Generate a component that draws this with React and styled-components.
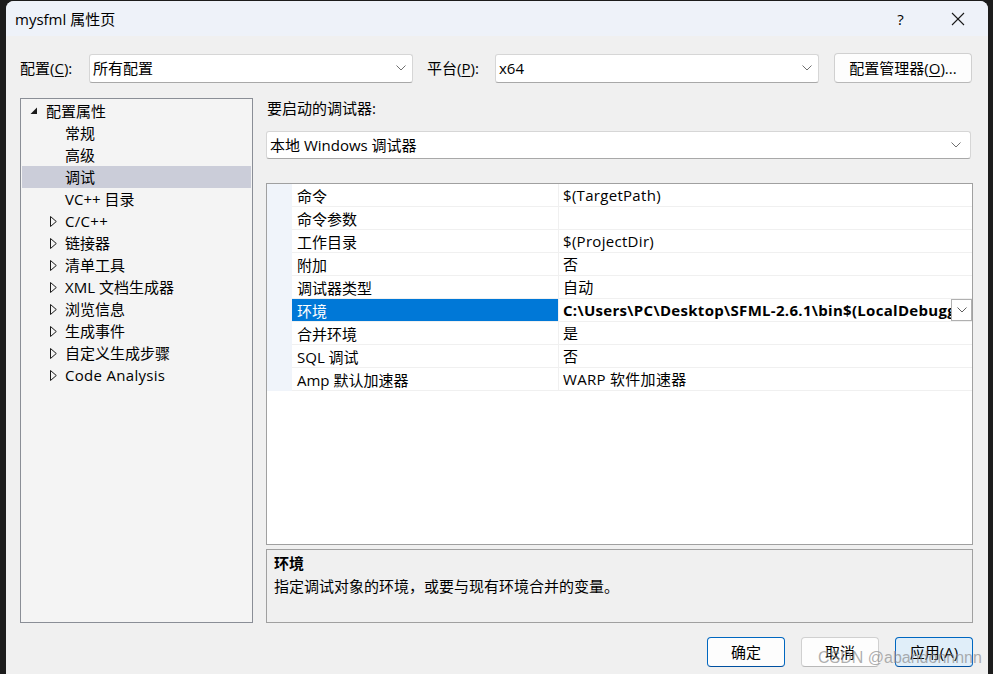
import React from "react";
import styled, { createGlobalStyle } from "styled-components";

const Global = createGlobalStyle`
  html, body { margin: 0; padding: 0; background: #1c1c1c; overflow: hidden; }
  body { font-family: "Open Sans", "Noto Sans CJK SC", sans-serif; }
  * { box-sizing: border-box; }
`;

const UI_FONT = `"Open Sans", "Noto Sans CJK SC", sans-serif`;

const Screen = styled.div`
  width: 993px;
  height: 674px;
  padding-left: 6px;
  padding-top: 1px;
  overflow: hidden;
  position: relative;
`;

const Window = styled.div`
  width: 982px;
  height: 700px;
  background: #f0f0f0;
  border-radius: 8px 8px 0 0;
  display: flex;
  flex-direction: column;
  font-family: ${UI_FONT};
  font-size: 15px;
  color: #000;
  overflow: hidden;
`;

const TitleBar = styled.div`
  height: 35px;
  background: #eef2f9;
  display: flex;
  align-items: center;
  padding-left: 9px;
  padding-right: 2px;
`;

const Title = styled.div`
  flex: 1;
  font-size: 15px;
  line-height: 1.2;
`;

const CaptionButton = styled.div`
  width: 57px;
  height: 35px;
  display: flex;
  align-items: center;
  justify-content: center;
  font-size: 15px;
`;

const Body = styled.div`
  padding: 0 15px 0 14px;
  display: flex;
  flex-direction: column;
`;

const TopRow = styled.div`
  margin-top: 17px;
  height: 30px;
  display: flex;
  align-items: center;
`;

const FieldLabel = styled.span`
  width: ${(p) => p.$w}px;
  line-height: 1.2;
  u { text-decoration: underline; text-underline-offset: 2px; }
`;

const Combo = styled.div`
  width: ${(p) => (p.$w ? `${p.$w}px` : "auto")};
  flex: ${(p) => (p.$w ? "none" : "1")};
  height: 29px;
  background: #fff;
  border: 1px solid #d6d6d6;
  border-bottom-color: #a8a8a8;
  border-radius: 3px;
  display: flex;
  align-items: center;
  padding: 0 6px 0 3px;
  margin-right: ${(p) => p.$mr || 0}px;
`;

const ComboText = styled.span`
  flex: 1;
  line-height: 1.2;
  white-space: nowrap;
`;

const Chevron = ({ color = "#707070" }) => (
  <svg width="10" height="6" viewBox="0 0 10 6">
    <polyline points="0.5,0.5 5,5 9.5,0.5" fill="none" stroke={color} strokeWidth="1" />
  </svg>
);

const PushButton = styled.button`
  font: inherit;
  font-size: 15px;
  color: #000;
  width: ${(p) => p.$w}px;
  height: 30px;
  padding: 0;
  border-radius: 4px;
  border: 1px solid ${(p) => (p.$accent ? "#0067c0" : "#d0d0d0")};
  border-bottom-color: ${(p) => (p.$accent ? "#0050a0" : "#b8b8b8")};
  background: ${(p) => (p.$tint ? "#e0eef9" : "#fdfdfd")};
  display: flex;
  align-items: center;
  justify-content: center;
  line-height: 1.2;
  u { text-decoration: underline; text-underline-offset: 2px; }
`;

const Main = styled.div`
  margin-top: 15px;
  height: 525px;
  display: flex;
`;

const TreePanel = styled.div`
  width: 233px;
  background: #f4f4f4;
  border: 1px solid #8a8e96;
  padding: 1px;
  display: flex;
  flex-direction: column;
`;

const TreeRow = styled.div`
  height: 22px;
  display: flex;
  align-items: center;
  background: ${(p) => (p.$selected ? "#cbcdd9" : "transparent")};
  padding-left: ${(p) => p.$indent}px;
  line-height: 1.2;
  white-space: nowrap;
  letter-spacing: ${(p) => (p.$latin ? "0.3px" : "0")};
`;

const Twisty = styled.span`
  width: ${(p) => p.$w || 15}px;
  display: flex;
  align-items: center;
`;

const RightPane = styled.div`
  margin-left: 13px;
  flex: 1;
  display: flex;
  flex-direction: column;
`;

const SectionLabel = styled.div`
  height: 20px;
  display: flex;
  align-items: center;
  padding-left: 1px;
  line-height: 1.2;
`;

const DebuggerCombo = styled(Combo)`
  margin-top: 13px;
  height: 28px;
  margin-right: 2px;
  padding-left: 3px;
  padding-right: 9px;
`;

const Grid = styled.div`
  margin-top: 24px;
  height: 362px;
  background: #fff;
  border: 1px solid #a0a0a0;
  display: flex;
  flex-direction: column;
`;

const GridRow = styled.div`
  height: 23px;
  display: grid;
  grid-template-columns: 25px 267px 1fr;
`;

const Gutter = styled.div`
  background: #f0f4fa;
`;

const NameCell = styled.div`
  display: flex;
  align-items: center;
  padding: 1px 0 0 5px;
  line-height: 1.2;
  white-space: nowrap;
  border-bottom: 1px solid #f0f0f0;
  border-right: 1px solid #f0f0f0;
  background: ${(p) => (p.$selected ? "#0078d7" : "#fff")};
  color: ${(p) => (p.$selected ? "#fff" : "#000")};
`;

const ValueCell = styled.div`
  display: flex;
  align-items: center;
  padding: 1px 0 0 4px;
  white-space: nowrap;
  overflow: hidden;
  border-bottom: 1px solid #f0f0f0;
  font-weight: ${(p) => (p.$bold ? 700 : 400)};
  letter-spacing: 0.3px;
`;

const ValueText = styled.span`
  flex: 1;
  min-width: 0;
  overflow: hidden;
  line-height: 1.3;
`;

const DropButton = styled.div`
  width: 21px;
  height: 22px;
  flex: none;
  margin-top: -1px;
  border: 1px solid #b0b0b0;
  background: #fff;
  display: flex;
  align-items: center;
  justify-content: center;
`;

const Description = styled.div`
  margin-top: 4px;
  height: 74px;
  border: 1px solid #a0a0a0;
  background: #f0f0f0;
  padding: 5px 7px;
  display: flex;
  flex-direction: column;
  gap: 6px;
`;

const DescTitle = styled.div`
  font-weight: 700;
  line-height: 17px;
`;

const DescText = styled.div`
  line-height: 17px;
`;

const ButtonRow = styled.div`
  margin-top: 14px;
  display: flex;
  justify-content: flex-end;
  gap: 16px;
`;

const Watermark = styled.div`
  position: absolute;
  left: 818px;
  top: 648px;
  white-space: nowrap;
  font-family: "Liberation Sans", sans-serif;
  font-size: 16px;
  line-height: 20px;
  color: rgba(140, 140, 140, 0.7);
  pointer-events: none;
`;

const ExpandedArrow = () => (
  <svg width="8" height="8" viewBox="0 0 8 8">
    <polygon points="7,0.5 7,7 0.5,7" fill="#1a1a1a" />
  </svg>
);

const CollapsedArrow = () => (
  <svg width="7" height="11" viewBox="0 0 7 11">
    <polygon points="0.5,0.5 6.3,5.5 0.5,10.5" fill="none" stroke="#1a1a1a" strokeWidth="1" />
  </svg>
);

const CloseGlyph = () => (
  <svg width="14" height="14" viewBox="0 0 14 14">
    <line x1="1" y1="1" x2="13" y2="13" stroke="#1a1a1a" strokeWidth="1.1" />
    <line x1="13" y1="1" x2="1" y2="13" stroke="#1a1a1a" strokeWidth="1.1" />
  </svg>
);

const tree = [
  { label: "配置属性", kind: "open", indent: 8 },
  { label: "常规", kind: "leaf", indent: 43 },
  { label: "高级", kind: "leaf", indent: 43 },
  { label: "调试", kind: "leaf", indent: 43, selected: true },
  { label: "VC++ 目录", kind: "leaf", indent: 43 },
  { label: "C/C++", kind: "closed", indent: 28, latin: true },
  { label: "链接器", kind: "closed", indent: 28 },
  { label: "清单工具", kind: "closed", indent: 28 },
  { label: "XML 文档生成器", kind: "closed", indent: 28 },
  { label: "浏览信息", kind: "closed", indent: 28 },
  { label: "生成事件", kind: "closed", indent: 28 },
  { label: "自定义生成步骤", kind: "closed", indent: 28 },
  { label: "Code Analysis", kind: "closed", indent: 28, latin: true },
];

const props = [
  ["命令", "$(TargetPath)"],
  ["命令参数", ""],
  ["工作目录", "$(ProjectDir)"],
  ["附加", "否"],
  ["调试器类型", "自动"],
  ["环境", "C:\\Users\\PC\\Desktop\\SFML-2.6.1\\bin$(LocalDebuggerEnvironment)", true],
  ["合并环境", "是"],
  ["SQL 调试", "否"],
  ["Amp 默认加速器", "WARP 软件加速器"],
];

export default function App() {
  return (
    <>
      <Global />
      <Screen>
        <Window>
          <TitleBar>
            <Title>mysfml 属性页</Title>
            <CaptionButton>?</CaptionButton>
            <CaptionButton>
              <CloseGlyph />
            </CaptionButton>
          </TitleBar>
          <Body>
            <TopRow>
              <FieldLabel $w={69}>
                配置(<u>C</u>):
              </FieldLabel>
              <Combo $w={324} $mr={14}>
                <ComboText>所有配置</ComboText>
                <Chevron />
              </Combo>
              <FieldLabel $w={68}>
                平台(<u>P</u>):
              </FieldLabel>
              <Combo $w={324} $mr={15}>
                <ComboText>x64</ComboText>
                <Chevron />
              </Combo>
              <PushButton $w={138}>
                配置管理器(<u>O</u>)...
              </PushButton>
            </TopRow>
            <Main>
              <TreePanel>
                {tree.map((t) => (
                  <TreeRow
                    key={t.label}
                    $indent={t.indent}
                    $selected={t.selected}
                    $latin={t.latin}
                  >
                    {t.kind === "open" && (
                      <Twisty $w={16}>
                        <ExpandedArrow />
                      </Twisty>
                    )}
                    {t.kind === "closed" && (
                      <Twisty>
                        <CollapsedArrow />
                      </Twisty>
                    )}
                    <span>{t.label}</span>
                  </TreeRow>
                ))}
              </TreePanel>
              <RightPane>
                <SectionLabel>要启动的调试器:</SectionLabel>
                <DebuggerCombo>
                  <ComboText>本地 Windows 调试器</ComboText>
                  <Chevron />
                </DebuggerCombo>
                <Grid>
                  {props.map(([name, value, sel]) => (
                    <GridRow key={name}>
                      <Gutter />
                      <NameCell $selected={sel}>{name}</NameCell>
                      <ValueCell $bold={sel}>
                        <ValueText>{value}</ValueText>
                        {sel && (
                          <DropButton>
                            <Chevron color="#606060" />
                          </DropButton>
                        )}
                      </ValueCell>
                    </GridRow>
                  ))}
                </Grid>
                <Description>
                  <DescTitle>环境</DescTitle>
                  <DescText>指定调试对象的环境，或要与现有环境合并的变量。</DescText>
                </Description>
              </RightPane>
            </Main>
            <ButtonRow>
              <PushButton $w={78} $accent>
                确定
              </PushButton>
              <PushButton $w={78}>取消</PushButton>
              <PushButton $w={78} $accent $tint>
                应用(A)
              </PushButton>
            </ButtonRow>
          </Body>
        </Window>
        <Watermark>CSDN @abandonnnnn</Watermark>
      </Screen>
    </>
  );
}
